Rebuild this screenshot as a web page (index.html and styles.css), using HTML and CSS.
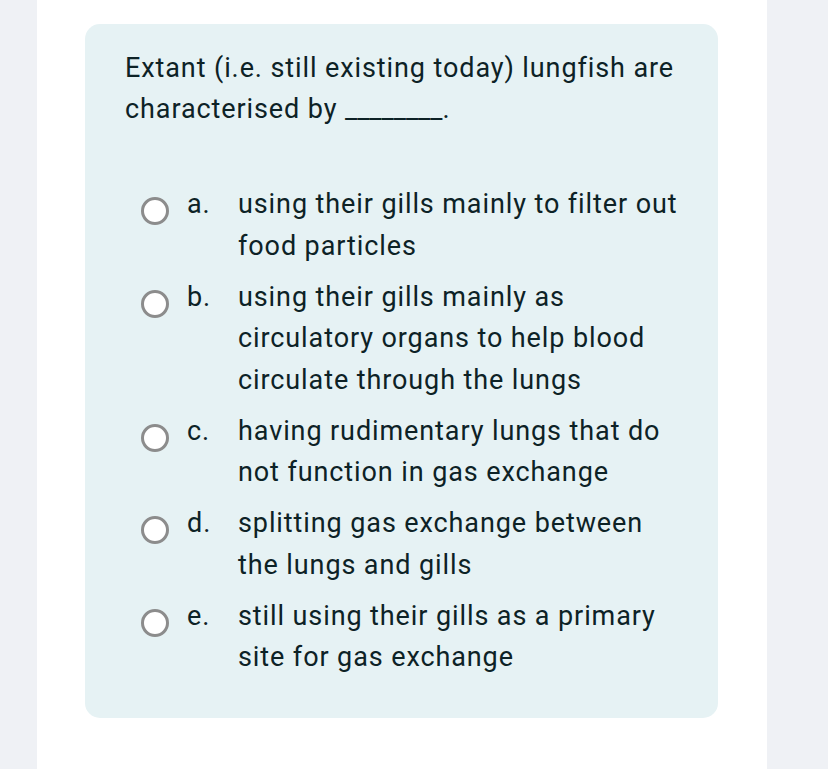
FILE: index.html
```html
<!DOCTYPE html>
<html lang="en">
<head>
<meta charset="utf-8">
<title>Question</title>
<link rel="stylesheet" href="styles.css">
</head>
<body>
<div class="page">
  <div class="card">
    <p class="question">Extant (i.e. still existing today) lungfish are characterised by <span class="blank">________</span>.</p>
    <div class="options">
      <label class="option"><span class="radio"></span><span class="letter">a.</span><span class="text">using their gills mainly to filter out food particles</span></label>
      <label class="option"><span class="radio"></span><span class="letter">b.</span><span class="text">using their gills mainly as circulatory organs to help blood circulate through the lungs</span></label>
      <label class="option"><span class="radio"></span><span class="letter">c.</span><span class="text">having rudimentary lungs that do not function in gas exchange</span></label>
      <label class="option"><span class="radio"></span><span class="letter">d.</span><span class="text">splitting gas exchange between the lungs and gills</span></label>
      <label class="option"><span class="radio"></span><span class="letter">e.</span><span class="text">still using their gills as a primary site for gas exchange</span></label>
    </div>
  </div>
</div>
</body>
</html>
```
FILE: styles.css
```css
html, body {
  margin: 0;
  padding: 0;
}
body {
  background: #eff1f5;
  font-family: Roboto, "Liberation Sans", sans-serif;
  color: #0d2226;
}
.page {
  margin-left: 37px;
  width: 730px;
  min-height: 769px;
  background: #ffffff;
  padding-top: 24px;
  box-sizing: border-box;
}
.card {
  margin-left: 48px;
  width: 633px;
  box-sizing: border-box;
  background: #e6f2f4;
  border-radius: 15px;
  padding: 24px 40px 39px 40px;
}
.question {
  margin: 0;
  font-size: 27px;
  line-height: 40.5px;
  letter-spacing: 0.9px;
}
.blank {
  letter-spacing: 0;
}
.options {
  margin-top: 55px;
  margin-left: 16px;
  display: flex;
  flex-direction: column;
  gap: 9.5px;
}
.option {
  display: flex;
  align-items: flex-start;
  font-size: 27px;
  line-height: 41.5px;
  letter-spacing: 0.9px;
}
.radio {
  flex: none;
  width: 28px;
  height: 28px;
  box-sizing: border-box;
  border: 3px solid #8c8c8c;
  border-radius: 50%;
  background: #ffffff;
  margin-top: 13px;
}
.letter {
  flex: none;
  width: 51px;
  margin-left: 18px;
}
.text {
  flex: 1;
}
```
